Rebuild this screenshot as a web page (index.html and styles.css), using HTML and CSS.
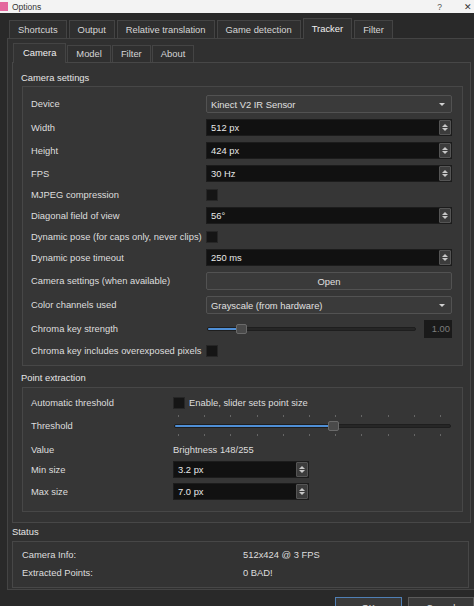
FILE: index.html
```html
<!DOCTYPE html>
<html lang="en">
<head>
    <meta charset="UTF-8">
    <title>Options</title>
    <link rel="stylesheet" href="styles.css">
</head>
<body>
    <div class="titlebar">
        <span class="app-icon"></span>
        <span class="title">Options</span>
        <span class="help">?</span>
        <span class="close">&#x2715;</span>
    </div>

    <div class="window">
        <div class="tabs">
            <div class="tab">Shortcuts</div>
            <div class="tab">Output</div>
            <div class="tab">Relative translation</div>
            <div class="tab">Game detection</div>
            <div class="tab active">Tracker</div>
            <div class="tab">Filter</div>
        </div>

        <div class="tab-panel">
            <div class="tabs sub-tabs">
                <div class="tab active">Camera</div>
                <div class="tab">Model</div>
                <div class="tab">Filter</div>
                <div class="tab">About</div>
            </div>

            <div class="sub-panel">
                <div class="group-title">Camera settings</div>
                <div class="group camera-grid">
                    <label>Device</label>
                    <div class="combo">Kinect V2 IR Sensor<span class="arrow"></span></div>

                    <label>Width</label>
                    <div class="spin"><span class="spin-value">512 px</span><span class="spin-btn"></span></div>

                    <label>Height</label>
                    <div class="spin"><span class="spin-value">424 px</span><span class="spin-btn"></span></div>

                    <label>FPS</label>
                    <div class="spin"><span class="spin-value">30 Hz</span><span class="spin-btn"></span></div>

                    <label>MJPEG compression</label>
                    <div class="check-row"><span class="checkbox"></span></div>

                    <label>Diagonal field of view</label>
                    <div class="spin"><span class="spin-value">56&deg;</span><span class="spin-btn"></span></div>

                    <label>Dynamic pose (for caps only, never clips)</label>
                    <div class="check-row"><span class="checkbox"></span></div>

                    <label>Dynamic pose timeout</label>
                    <div class="spin"><span class="spin-value">250 ms</span><span class="spin-btn"></span></div>

                    <label>Camera settings (when available)</label>
                    <button class="push">Open</button>

                    <label>Color channels used</label>
                    <div class="combo">Grayscale (from hardware)<span class="arrow"></span></div>

                    <label>Chroma key strength</label>
                    <div class="slider-row">
                        <div class="slider">
                            <div class="groove"><div class="fill" style="width: 16%"></div></div>
                            <div class="handle" style="left: 14%"></div>
                        </div>
                        <div class="readout">1.00</div>
                    </div>

                    <label>Chroma key includes overexposed pixels</label>
                    <div class="check-row"><span class="checkbox"></span></div>
                </div>

                <div class="group-title">Point extraction</div>
                <div class="group point-grid">
                    <label>Automatic threshold</label>
                    <div class="check-row"><span class="checkbox"></span><span>Enable, slider sets point size</span></div>

                    <label>Threshold</label>
                    <div class="slider ticked">
                        <div class="ticks top">
                            <i></i><i></i><i></i><i></i><i></i><i></i><i></i><i></i><i></i><i></i><i></i>
                        </div>
                        <div class="groove"><div class="fill" style="width: 56%"></div></div>
                        <div class="handle" style="left: 55.5%"></div>
                        <div class="ticks bottom">
                            <i></i><i></i><i></i><i></i><i></i><i></i><i></i><i></i><i></i><i></i><i></i>
                        </div>
                    </div>

                    <label>Value</label>
                    <div>Brightness 148/255</div>

                    <label>Min size</label>
                    <div class="spin short"><span class="spin-value">3.2 px</span><span class="spin-btn"></span></div>

                    <label>Max size</label>
                    <div class="spin short"><span class="spin-value">7.0 px</span><span class="spin-btn"></span></div>
                </div>
            </div>

            <div class="group-title status-title">Status</div>
            <div class="group status-grid">
                <label>Camera Info:</label>
                <div>512x424 @ 3 FPS</div>
                <label>Extracted Points:</label>
                <div>0 BAD!</div>
            </div>
        </div>

        <div class="footer">
            <button class="btn default">OK</button>
            <button class="btn">Cancel</button>
        </div>
    </div>
</body>
</html>
```

FILE: styles.css
```css
* {
    margin: 0;
    padding: 0;
    box-sizing: border-box;
}

body {
    width: 474px;
    height: 606px;
    overflow: hidden;
    background: #292929;
    font-family: "Liberation Sans", Arial, sans-serif;
    font-size: 9.4px;
    color: #dedede;
}

/* Window title bar */
.titlebar {
    height: 13px;
    display: flex;
    align-items: center;
    background: #f3f3f3;
    color: #333;
    font-size: 8.5px;
}

.app-icon {
    width: 8px;
    height: 9px;
    margin-right: 4px;
    background: #e4689e;
}

.help {
    margin-left: auto;
    margin-right: 22px;
    color: #555;
}

.close {
    margin-right: 2px;
    font-size: 9px;
}

.window {
    padding: 5px 0 0 7px;
}

/* Tabs */
.tabs {
    display: flex;
    align-items: flex-end;
    gap: 2px;
    padding-left: 2px;
}

.tab {
    height: 18px;
    line-height: 17px;
    padding: 0 8px;
    background: #2f2f2f;
    border: 1px solid #444;
    border-bottom: none;
    color: #d6d6d6;
    white-space: nowrap;
}

.tab.active {
    height: 21px;
    line-height: 19px;
    margin-bottom: -1px;
    background: #303030;
    color: #f0f0f0;
    position: relative;
}

.tab-panel {
    height: 552px;
    margin-right: -4px;
    padding: 4px 6px 0 4px;
    background: #303030;
    border: 1px solid #444;
}

.sub-tabs {
    gap: 1px;
    padding-left: 1px;
}

.sub-tabs .tab {
    height: 17px;
    line-height: 16px;
    padding: 0 8px;
}

.sub-tabs .tab.active {
    height: 20px;
    line-height: 18px;
    padding: 0 9px;
    background: #333;
}

.sub-panel {
    height: 461px;
    padding: 0 7px 0 8px;
    background: #333;
    border: 1px solid #474747;
}

/* Group boxes */
.group-title {
    height: 14px;
    line-height: 14px;
    margin-top: 8px;
    color: #e6e6e6;
}

.group {
    display: grid;
    align-items: center;
    row-gap: 6px;
    margin: 1px 0 0 1px;
    padding: 8px 10px 9px 8px;
    background: #363636;
    border: 1px solid #474747;
}

.camera-grid {
    grid-template-columns: 175px 1fr;
    padding-bottom: 8px;
}

.camera-grid + .group-title {
    margin-top: 5px;
}

.point-grid {
    grid-template-columns: 142px 1fr;
    grid-template-rows: 13px 24px 13px 17px 17px;
    row-gap: 5px;
    margin-top: 2px;
    padding-bottom: 11px;
}

.status-title {
    margin-top: 2px;
}

.status-grid {
    grid-template-columns: 221px 1fr;
    row-gap: 4px;
    margin: 2px 2px 0 0;
    padding: 6px 8px 7px 9px;
    background: #333;
    line-height: 14px;
}

label {
    line-height: 12px;
    white-space: nowrap;
}

/* Inputs */
.combo,
.push {
    height: 18px;
    display: flex;
    align-items: center;
    padding-left: 4px;
    background: #3a3a3a;
    border: 1px solid #525252;
    border-radius: 2px;
    color: #e0e0e0;
    font: inherit;
}

.combo {
    position: relative;
}

.arrow {
    position: absolute;
    right: 6px;
    top: 7px;
    border-left: 3px solid transparent;
    border-right: 3px solid transparent;
    border-top: 3px solid #d0d0d0;
}

.push {
    justify-content: center;
    padding-left: 0;
}

.spin {
    height: 17px;
    display: flex;
    background: #111;
    border: 1px solid #1c1c1c;
}

.spin.short {
    width: 136px;
}

.spin-value {
    flex: 1;
    padding-left: 4px;
    line-height: 15px;
    color: #e8e8e8;
}

.spin-btn {
    width: 12px;
    position: relative;
    background: #3c3c3c;
    border: 1px solid #555;
    border-radius: 1px;
}

.spin-btn::before,
.spin-btn::after {
    content: "";
    position: absolute;
    left: 2px;
    border-left: 3px solid transparent;
    border-right: 3px solid transparent;
}

.spin-btn::before {
    top: 3px;
    border-bottom: 3px solid #c8c8c8;
}

.spin-btn::after {
    bottom: 3px;
    border-top: 3px solid #c8c8c8;
}

.check-row {
    height: 13px;
    display: flex;
    align-items: center;
    gap: 4px;
}

.checkbox {
    width: 12px;
    height: 12px;
    background: #151515;
    border: 1px solid #262626;
}

/* Sliders */
.slider-row {
    height: 18px;
    display: flex;
    align-items: center;
    gap: 7px;
}

.slider {
    flex: 1;
    height: 18px;
    position: relative;
    display: flex;
    flex-direction: column;
    justify-content: center;
}

.groove {
    height: 4px;
    margin: 0 1px;
    background: #262626;
    border: 1px solid #1e1e1e;
    border-radius: 2px;
}

.fill {
    height: 100%;
    background: #4f8fd6;
    border-radius: 2px;
}

.handle {
    position: absolute;
    top: 4px;
    width: 11px;
    height: 10px;
    background: #4a4a4a;
    border: 1px solid #6a6a6a;
    border-radius: 2px;
}

.readout {
    width: 28px;
    height: 18px;
    line-height: 18px;
    padding-right: 2px;
    text-align: right;
    background: #1a1a1a;
    color: #7c7c7c;
}

.slider.ticked {
    height: 22px;
    justify-content: space-between;
}

.slider.ticked .handle {
    top: 6px;
}

.ticks {
    height: 3px;
    display: flex;
    justify-content: space-between;
    padding: 0 11px 0 5px;
}

.ticks i {
    width: 1px;
    height: 2px;
    background: #666;
}

/* Dialog buttons */
.footer {
    display: flex;
    gap: 6px;
    padding: 7px 0 0 328px;
}

.btn {
    width: 68px;
    height: 20px;
    background: #3a3a3a;
    border: 1px solid #5a5a5a;
    color: #e0e0e0;
    font: inherit;
}

.btn.default {
    border-color: #4f7fb5;
}
```
